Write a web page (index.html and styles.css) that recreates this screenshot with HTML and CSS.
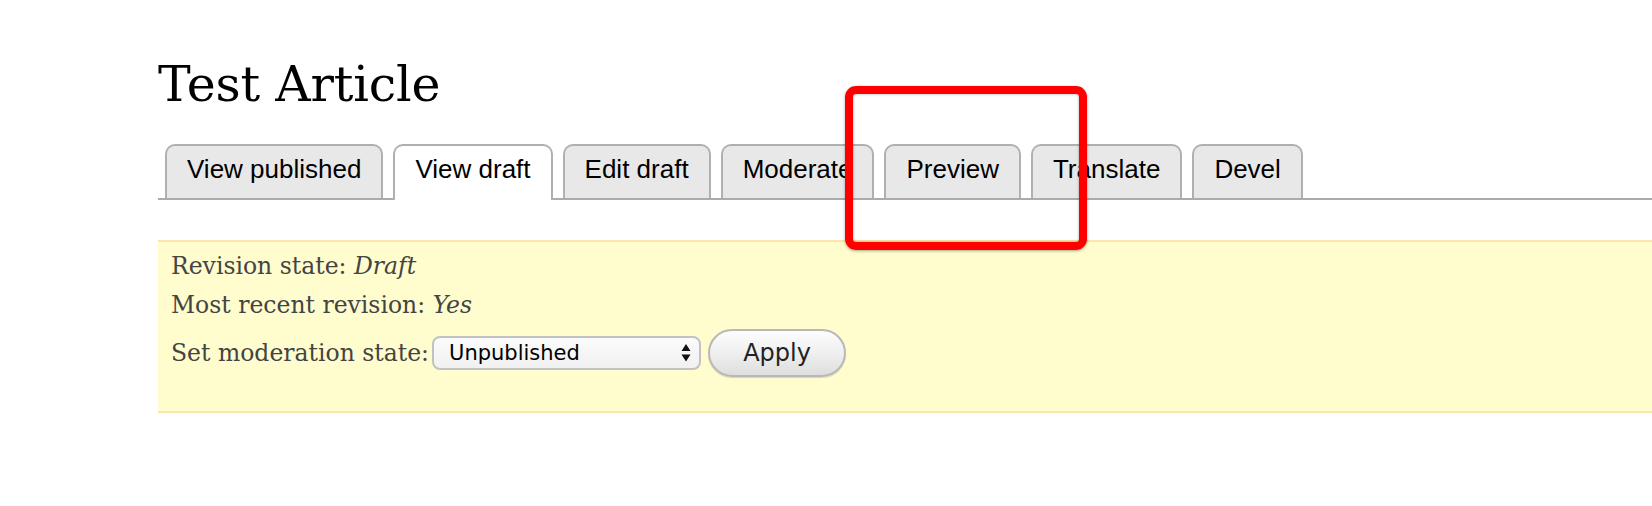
FILE: index.html
```html
<!DOCTYPE html>
<html lang="en">
<head>
<meta charset="utf-8">
<title>Test Article</title>
<link rel="stylesheet" href="styles.css">
</head>
<body>
<div class="page">
  <h1 class="title">Test Article</h1>
  <ul class="tabs">
    <li class="tab"><a href="#">View published</a></li>
    <li class="tab active"><a href="#">View draft</a></li>
    <li class="tab"><a href="#">Edit draft</a></li>
    <li class="tab"><a href="#">Moderate</a></li>
    <li class="tab"><a href="#">Preview</a></li>
    <li class="tab"><a href="#">Translate</a></li>
    <li class="tab"><a href="#">Devel</a></li>
  </ul>
  <div class="moderation">
    <div class="line">Revision state: <em>Draft</em></div>
    <div class="line">Most recent revision: <em>Yes</em></div>
    <form class="form-row">
      <label class="label" for="state">Set moderation state:</label>
      <span class="select-wrap">
        <select id="state" class="select">
          <option>Unpublished</option>
        </select>
        <svg class="arrows" width="10" height="18" viewBox="0 0 10 18"><path d="M5 0 L9.5 7 L0.5 7 Z M0.5 10.5 L9.5 10.5 L5 17.5 Z" fill="#111"/></svg>
      </span>
      <button type="button" class="apply">Apply</button>
    </form>
  </div>
  <div class="highlight"></div>
</div>
</body>
</html>
```

FILE: styles.css
```css
html, body {
  margin: 0;
  padding: 0;
  background: #ffffff;
}

.page {
  position: relative;
  padding-left: 158px;
  min-height: 506px;
}

.title {
  margin: 0;
  padding-top: 57px;
  font-family: "DejaVu Serif", serif;
  font-weight: normal;
  font-size: 49px;
  line-height: 56px;
  color: #000;
  letter-spacing: -0.2px;
}

.tabs {
  list-style: none;
  margin: 31px 0 0 0;
  padding: 0 0 0 7px;
  display: flex;
  align-items: flex-end;
  gap: 10px;
  border-bottom: 2px solid #ababab;
}

.tab a {
  display: block;
  box-sizing: border-box;
  height: 54px;
  padding: 9px 20px 0 20px;
  border: 2px solid #b0b0b0;
  border-bottom: none;
  border-radius: 10px 10px 0 0;
  background: #e8e8e8;
  font-family: "Liberation Sans", Arial, sans-serif;
  font-size: 26px;
  line-height: 28px;
  color: #000;
  text-decoration: none;
}

.tab.active a {
  background: #ffffff;
  height: 56px;
  margin-bottom: -2px;
}

.moderation {
  margin-top: 40px;
  border-top: 2px solid #ffe5ad;
  border-bottom: 2px solid #ffe5ad;
  background: #fffccd;
  padding: 5px 13px 34px 13px;
  font-family: "DejaVu Serif", serif;
  font-size: 23.5px;
  color: #444;
}

.line {
  line-height: 39px;
}

.line em {
  font-style: italic;
}

.form-row {
  margin: 4px 0 0 0;
  display: flex;
  align-items: center;
  height: 48px;
}

.label {
  line-height: 39px;
  margin-right: 3px;
}

.select-wrap {
  position: relative;
  display: block;
}

.select {
  appearance: none;
  -webkit-appearance: none;
  box-sizing: border-box;
  width: 269px;
  height: 34px;
  margin: 0;
  padding: 0 0 0 15px;
  border: 2px solid #c2c2c2;
  border-radius: 8px;
  background: linear-gradient(#fbfbfb, #f1f1f1);
  font-family: "DejaVu Sans", sans-serif;
  font-size: 21px;
  color: #000;
  outline: none;
}

.arrows {
  position: absolute;
  right: 10px;
  top: 8px;
  pointer-events: none;
}

.apply {
  box-sizing: border-box;
  width: 138px;
  height: 48px;
  margin-left: 7px;
  padding: 0;
  border: 2px solid #b8b8b8;
  border-radius: 24px;
  background: linear-gradient(#fdfdfd, #efefef 50%, #dedede);
  box-shadow: 0 1px 1px rgba(0, 0, 0, 0.15);
  font-family: "DejaVu Sans", sans-serif;
  font-size: 24px;
  color: #222;
}

.highlight {
  position: absolute;
  left: 845px;
  top: 86px;
  width: 242px;
  height: 164px;
  box-sizing: border-box;
  border: 8px solid #ff0000;
  border-radius: 11px;
  box-shadow: 0 1px 3px rgba(0, 0, 0, 0.35), inset 0 0 3px rgba(0, 0, 0, 0.35);
  pointer-events: none;
}
```
